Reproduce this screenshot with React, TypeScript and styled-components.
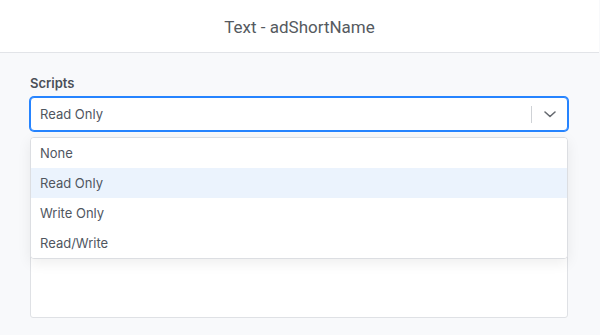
import React from "react";
import styled, { createGlobalStyle } from "styled-components";

const Global = createGlobalStyle`
  html, body { margin: 0; padding: 0; background: #f8f9fb; }
  body { font-family: Inter, "Noto Sans", sans-serif; }
`;

const Modal = styled.div`
  width: 599px;
  height: 335px;
  background: #f8f9fb;
  display: flex;
  flex-direction: column;
  overflow: hidden;
`;

const Header = styled.div`
  height: 53px;
  background: #ffffff;
  border-bottom: 1px solid #e2e4e8;
  display: flex;
  align-items: center;
  justify-content: center;
  font-family: Roboto, "Liberation Sans", sans-serif;
  font-size: 17px;
  color: #555a60;
  padding-top: 1px;
  box-sizing: border-box;
`;

const Body = styled.div`
  padding: 22px 31px 0 30px;
  display: flex;
  flex-direction: column;
`;

const Label = styled.div`
  font-size: 13px;
  font-weight: 600;
  color: #4a4f57;
  line-height: 16px;
  margin-bottom: 6px;
`;

const SelectWrap = styled.div`
  position: relative;
`;

const Control = styled.div`
  height: 32px;
  border: 1px solid #2684ff;
  box-shadow: 0 0 0 1px #2684ff;
  border-radius: 4px;
  background: #fff;
  display: flex;
  align-items: center;
  box-sizing: content-box;
`;

const Value = styled.div`
  flex: 1;
  padding-left: 9px;
  font-size: 13px;
  color: #50565f;
`;

const Separator = styled.span`
  width: 1px;
  height: 17px;
  background: #cfd2d6;
`;

const Indicator = styled.div`
  width: 35px;
  display: flex;
  align-items: center;
  justify-content: center;
  color: #666a70;
`;

const Menu = styled.div`
  position: absolute;
  top: 40px;
  left: 0;
  right: 0;
  background: #fff;
  border: 1px solid #dcdee2;
  border-radius: 4px;
  box-shadow: 0 4px 14px rgba(0, 0, 0, 0.07);
  z-index: 2;
  overflow: hidden;
`;

const Option = styled.div<{ $active?: boolean }>`
  height: 30px;
  display: flex;
  align-items: center;
  padding-left: 9px;
  font-size: 13px;
  color: #50565f;
  background: ${(p) => (p.$active ? "#ebf3fd" : "#fff")};
`;

const TextArea = styled.div`
  margin-top: 19px;
  height: 166px;
  background: #fff;
  border: 1px solid #dfe1e5;
  border-radius: 3px;
`;

const options = ["None", "Read Only", "Write Only", "Read/Write"];

export default function App() {
  return (
    <>
      <Global />
      <Modal>
        <Header>Text - adShortName</Header>
        <Body>
          <Label>Scripts</Label>
          <SelectWrap>
            <Control>
              <Value>Read Only</Value>
              <Separator />
              <Indicator>
                <svg width="14" height="14" viewBox="0 0 14 14" fill="none">
                  <path d="M2 5l5 4.5L12 5" stroke="currentColor" strokeWidth="1.6" strokeLinecap="round" strokeLinejoin="round" />
                </svg>
              </Indicator>
            </Control>
            <Menu>
              {options.map((o) => (
                <Option key={o} $active={o === "Read Only"}>
                  {o}
                </Option>
              ))}
            </Menu>
          </SelectWrap>
          <TextArea />
        </Body>
      </Modal>
    </>
  );
}
